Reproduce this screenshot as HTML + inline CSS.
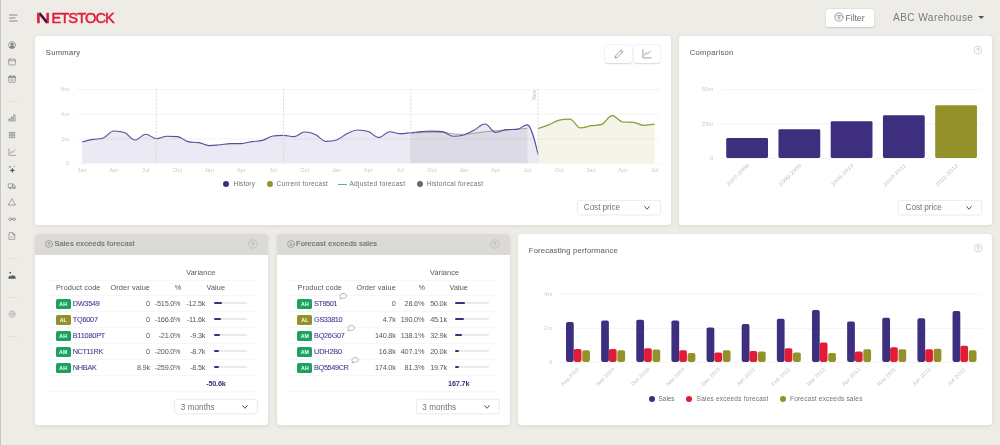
<!DOCTYPE html>
<html lang="en">
<head>
<meta charset="utf-8">
<title>Netstock dashboard</title>
<style>
*{margin:0;padding:0;box-sizing:border-box}
h1,h2{font-weight:400}
html,body{width:1000px;height:445px;overflow:hidden;background:#eeece7}
body{position:relative;font-family:"Liberation Sans",sans-serif}
.edge{position:absolute;left:0;top:0;width:1.200px;height:445px;background:#c6c5c2}
.t{position:absolute;white-space:nowrap;line-height:1;font-family:"Liberation Sans",sans-serif}
.ic{position:absolute;overflow:visible}
svg text{font-family:"Liberation Sans",sans-serif}
.card{position:absolute;background:#fff;border-radius:3px;box-shadow:0 1px 4px rgba(80,70,50,.12),0 0 1px rgba(80,70,50,.06)}
.chead{position:absolute;background:#dbdad6;border-radius:3px 3px 0 0}
.btn{position:absolute;background:#fff;border-radius:2.5px;box-shadow:0 .5px 1.500px rgba(60,40,90,.16),0 0 0 .5px rgba(60,40,90,.06)}
.sel{position:absolute;background:#fff;border:.7px solid #e2e2e8;border-radius:2px}
.sdiv{position:absolute;left:9px;width:8px;height:.6px;background:#e0ded9}
.dot{position:absolute;border-radius:50%}
.tl{position:absolute;height:.8px;background:#f7f7f7}
.badge{position:absolute;width:15px;height:10.500px;border-radius:1.600px;color:#fff;font-weight:700;font-size:5.200px;line-height:11px;text-align:center;letter-spacing:.1px}
.trk{position:absolute;height:2.300px;border-radius:1.200px;background:#eceae6}
.trk i{display:block;height:100%;border-radius:1.200px;background:#3d2f7e}
</style>
</head>
<body>
<div id="app" style="will-change:transform">
<div class="edge"></div>
<nav><svg class="ic" style="left:8.600px;top:13.800px" width="9" height="8" viewBox="0 0 9 8" stroke="#6a6a6a" stroke-width=".75" stroke-linecap="round"><path d="M.5 1h7.600M.5 4h5.600M.5 7h7.600"/></svg>
<svg class="ic" style="left:8.35px;top:41.05px" width="8.10" height="8.10" viewBox="0 0 9 9" fill="none" stroke="#828282" stroke-width="0.75" stroke-linecap="round" stroke-linejoin="round"><circle cx="4.5" cy="4.5" r="3.8"/><circle cx="4.5" cy="3.5" r="1.3" fill="#828282"/><path d="M1.9 7c.5-1.3 1.5-1.7 2.6-1.7s2.1.4 2.6 1.7c-.7.8-1.6 1.2-2.6 1.2S2.600 7.800 1.900 7z" fill="#828282"/></svg>
<svg class="ic" style="left:8.35px;top:58.45px" width="8.10" height="8.10" viewBox="0 0 9 9" fill="none" stroke="#828282" stroke-width="0.75" stroke-linecap="round" stroke-linejoin="round"><rect x=".8" y="1.2" width="7.4" height="6.6" rx=".8"/><path d="M.8 3h7.400" stroke-width=".7"/></svg>
<svg class="ic" style="left:8.35px;top:75.15px" width="8.10" height="8.10" viewBox="0 0 9 9" fill="none" stroke="#828282" stroke-width="0.75" stroke-linecap="round" stroke-linejoin="round"><rect x=".8" y="1.400" width="7.4" height="6.800" rx=".8"/><path d="M.8 2.400h7.400" stroke-width="1.300"/><path d="M2.500 .600v1.200M6.500 .600v1.200"/><rect x="3.300" y="4.300" width="2.400" height="2.200" stroke-width=".5"/></svg>
<svg class="ic" style="left:8.35px;top:114.35px" width="8.10" height="8.10" viewBox="0 0 9 9" fill="none" stroke="#828282" stroke-width="0.75" stroke-linecap="round" stroke-linejoin="round"><rect x="1" y="5.600" width="1.500" height="2.400" rx=".3"/><rect x="3.700" y="3.500" width="1.500" height="4.500" rx=".3"/><rect x="6.400" y="1" width="1.500" height="7" rx=".3"/></svg>
<svg class="ic" style="left:8.35px;top:131.15px" width="8.10" height="8.10" viewBox="0 0 9 9" fill="none" stroke="#828282" stroke-width="0.75" stroke-linecap="round" stroke-linejoin="round"><g fill="#979797" stroke="none"><rect x="1" y="1" width="2" height="2"/><rect x="3.500" y="1" width="2" height="2"/><rect x="6" y="1" width="2" height="2"/><rect x="1" y="3.500" width="2" height="2"/><rect x="3.500" y="3.500" width="2" height="2"/><rect x="6" y="3.500" width="2" height="2"/><rect x="1" y="6" width="2" height="2"/><rect x="3.500" y="6" width="2" height="2"/><rect x="6" y="6" width="2" height="2"/></g></svg>
<svg class="ic" style="left:8.35px;top:147.95px" width="8.10" height="8.10" viewBox="0 0 9 9" fill="none" stroke="#828282" stroke-width="0.75" stroke-linecap="round" stroke-linejoin="round"><path d="M1 .800v7.400h7.400"/><path d="M2.200 6.200l1.700-2.400 1.300 1.200 2.600-2.800"/></svg>
<svg class="ic" style="left:8.35px;top:164.75px" width="8.10" height="8.10" viewBox="0 0 9 9" fill="none" stroke="#828282" stroke-width="0.75" stroke-linecap="round" stroke-linejoin="round"><g fill="#5e5e5e" stroke="none"><path d="M4.900 2.800l.95 2.150 2.150.95-2.150.95-.95 2.150-.95-2.150-2.150-.95 2.150-.95z"/><path d="M2.100 .9l.4.900.9.400-.9.400-.4.900-.4-.900-.9-.400.9-.400z"/><path d="M6.900 .5l.3.600.6.300-.6.300-.3.600-.3-.600-.6-.300.6-.300z"/></g></svg>
<svg class="ic" style="left:8.35px;top:181.55px" width="8.10" height="8.10" viewBox="0 0 9 9" fill="none" stroke="#828282" stroke-width="0.75" stroke-linecap="round" stroke-linejoin="round"><path d="M.8 2h4.600v4.400H.8zM5.400 3.300h1.700l1.300 1.500v1.600H5.400z"/><circle cx="2.400" cy="6.700" r=".8" fill="#edebe6"/><circle cx="6.700" cy="6.700" r=".8" fill="#edebe6"/></svg>
<svg class="ic" style="left:8.35px;top:198.35px" width="8.10" height="8.10" viewBox="0 0 9 9" fill="none" stroke="#828282" stroke-width="0.75" stroke-linecap="round" stroke-linejoin="round"><path d="M4.500 1.200L8.300 7.800H.700z"/></svg>
<svg class="ic" style="left:8.35px;top:215.15px" width="8.10" height="8.10" viewBox="0 0 9 9" fill="none" stroke="#828282" stroke-width="0.75" stroke-linecap="round" stroke-linejoin="round"><circle cx="2.400" cy="4.700" r="1.500"/><circle cx="6.600" cy="4.700" r="1.500"/><path d="M3.900 4.500h1.200"/></svg>
<svg class="ic" style="left:8.35px;top:231.95px" width="8.10" height="8.10" viewBox="0 0 9 9" fill="none" stroke="#828282" stroke-width="0.75" stroke-linecap="round" stroke-linejoin="round"><path d="M1.500 .800h4l2 2v5.400h-6z"/><path d="M5.500 .800v2h2"/><path d="M3 6.200l.9-1.200.8.700 1.100-1.300" stroke-width=".55"/></svg>
<svg class="ic" style="left:8.35px;top:270.75px" width="8.10" height="8.10" viewBox="0 0 9 9" fill="none" stroke="#828282" stroke-width="0.75" stroke-linecap="round" stroke-linejoin="round"><g fill="#5c5c5c" stroke="none"><path d="M.5 8.600V6.700L2.200 4.900l1.100 1.100 1.300-1.700 1 1.300 1-1 1.900 2v2z"/><circle cx="2.500" cy="1.900" r="1"/></g></svg>
<svg class="ic" style="left:8.35px;top:309.75px" width="8.10" height="8.10" viewBox="0 0 9 9" fill="none" stroke="#828282" stroke-width="0.75" stroke-linecap="round" stroke-linejoin="round"><path d="M7.43 3.85 L8.21 3.98 L8.21 5.02 L7.43 5.15 L7.03 6.11 L7.50 6.76 L6.76 7.50 L6.11 7.03 L5.15 7.43 L5.02 8.21 L3.98 8.21 L3.85 7.43 L2.89 7.03 L2.24 7.50 L1.50 6.76 L1.97 6.11 L1.57 5.15 L0.79 5.02 L0.79 3.98 L1.57 3.85 L1.97 2.89 L1.50 2.24 L2.24 1.50 L2.89 1.97 L3.85 1.57 L3.98 0.79 L5.02 0.79 L5.15 1.57 L6.11 1.97 L6.76 1.50 L7.50 2.24 L7.03 2.89z" stroke="#8e8e8e" stroke-width=".55"/><circle cx="4.500" cy="4.500" r="1.400" stroke="#8e8e8e" stroke-width=".55"/></svg>
<div class="sdiv" style="top:100.75px"></div>
<div class="sdiv" style="top:258.25px"></div>
<div class="sdiv" style="top:297.25px"></div>
<div class="sdiv" style="top:335.75px"></div></nav>
<header><h1 class="logo" aria-label="NETSTOCK"><span class="t" style="top:11.00px;font-size:14.6px;color:#e31b37;left:36.25px;transform:scaleX(1.34);transform-origin:0 0;-webkit-text-stroke:.6px #e31b37;">N</span><span class="t" style="top:11.00px;font-size:14.6px;color:#e31b37;letter-spacing:-0.895px;left:51.50px;-webkit-text-stroke:0.5px #e31b37;">ETSTOCK</span></h1>
<svg class="ic" style="left:0;top:0" width="60" height="30" viewBox="0 0 60 30"><clipPath id="nclip"><rect x="39.700" y="12" width="7.400" height="12"/></clipPath><path d="M37.500 12.400h3l8.800 10.800h-3z" fill="#2b1a4f" clip-path="url(#nclip)"/></svg>
<div class="btn" style="left:825.6px;top:8.5px;width:48.2px;height:18.6px"></div>
<svg class="ic" style="left:833.7px;top:12.300px" width="10" height="10" viewBox="0 0 10 10" fill="none" stroke="#777" stroke-width=".7" stroke-linecap="round"><circle cx="5" cy="5" r="4.100"/><path d="M2.900 3.600h4.200M3.600 5.100h2.800M4.400 6.600h1.200"/></svg>
<span class="t" style="top:14.00px;font-size:8.8px;color:#6e6e6e;letter-spacing:-0.113px;left:845.60px;">Filter</span>
<span class="t" style="top:13.00px;font-size:10.1px;color:#7a7a7a;letter-spacing:0.432px;left:893.00px;">ABC Warehouse</span>
<svg class="ic" style="left:978.300px;top:15.900px" width="7" height="4" viewBox="0 0 7 4"><path d="M.2 0h6L3.200 3z" fill="#555"/></svg></header>
<main>
<section class="panel" id="summary">
<div class="card" style="left:35px;top:36.3px;width:635.60px;height:189.00px"></div>
<h2 class="t" style="top:49.00px;font-size:7.6px;color:#696969;letter-spacing:0.300px;left:45.80px;-webkit-text-stroke:0.1px #696969;">Summary</h2>
<div class="btn b2" style="left:605.3px;top:44.600px;width:26.6px;height:18.300px"></div>
<div class="btn b2" style="left:633.9px;top:44.600px;width:26.4px;height:18.300px"></div>
<svg class="ic" style="left:613.6px;top:48.700px" width="10" height="10" viewBox="0 0 10 10" fill="none" stroke="#777" stroke-width=".7" stroke-linejoin="round"><path d="M1 9l.7-2.400L7.300 1l1.700 1.700-5.600 5.600z"/><path d="M6.400 1.900l1.700 1.700"/></svg>
<svg class="ic" style="left:642.2px;top:48.700px" width="10" height="10" viewBox="0 0 10 10" fill="none" stroke="#777" stroke-width=".7" stroke-linecap="round" stroke-linejoin="round"><path d="M.9 .600v8.300h8.300"/><path d="M2.400 6.200l1.700-2.500 1.400 1.300 2.900-2.900"/></svg>
<svg class="ic" style="left:0;top:0" width="1000" height="445" viewBox="0 0 1000 445">
<path d="M76.800 89.50H660" stroke="#f1f1f1" stroke-width=".8"/>
<path d="M76.800 114.20H660" stroke="#f1f1f1" stroke-width=".8"/>
<path d="M76.800 138.90H660" stroke="#f1f1f1" stroke-width=".8"/>
<path d="M76.800 163.60H660" stroke="#f1f1f1" stroke-width=".8"/>
<path d="M82.10,142.00 C82.10,142.00 88.46,140.20 92.70,139.40 C96.94,138.60 99.06,139.40 103.30,138.00 C107.54,136.60 109.67,131.00 113.91,131.00 C118.15,131.00 120.27,131.00 124.51,132.60 C128.75,134.20 130.87,140.00 135.11,140.00 C139.35,140.00 141.47,134.20 145.71,134.20 C149.95,134.20 152.07,138.60 156.31,138.60 C160.55,138.60 162.68,136.20 166.92,136.20 C171.16,136.20 173.28,136.20 177.52,136.60 C181.76,137.00 183.88,140.60 188.12,141.60 C192.36,142.60 194.48,141.80 198.72,142.60 C202.96,143.40 205.08,145.60 209.32,145.60 C213.56,145.60 215.69,145.20 219.93,144.80 C224.17,144.40 226.29,143.60 230.53,143.60 C234.77,143.60 236.89,143.60 241.13,143.60 C245.37,143.60 247.49,142.24 251.73,141.60 C255.97,140.96 258.09,141.52 262.33,140.40 C266.57,139.28 268.70,136.60 272.94,136.00 C277.18,135.40 279.30,135.40 283.54,135.40 C287.78,135.40 289.90,136.60 294.14,136.60 C298.38,136.60 300.50,132.00 304.74,132.00 C308.98,132.00 311.10,132.52 315.34,134.40 C319.58,136.28 321.71,141.40 325.95,141.40 C330.19,141.40 332.31,141.40 336.55,140.00 C340.79,138.60 342.91,135.60 347.15,133.60 C351.39,131.60 353.51,130.00 357.75,130.00 C361.99,130.00 364.11,130.08 368.35,131.60 C372.59,133.12 374.72,137.60 378.96,137.60 C383.20,137.60 385.32,131.80 389.56,131.80 C393.80,131.80 395.92,133.60 400.16,133.60 C404.40,133.60 406.52,133.10 410.76,132.70 C415.00,132.30 417.12,131.92 421.36,131.60 C425.60,131.28 427.73,131.10 431.97,131.10 C436.21,131.10 438.33,131.10 442.57,131.60 C446.81,132.10 448.93,136.30 453.17,136.30 C457.41,136.30 459.53,136.26 463.77,135.00 C468.01,133.74 470.13,132.20 474.37,130.00 C478.61,127.80 480.74,124.00 484.98,124.00 C489.22,124.00 491.34,132.40 495.58,132.40 C499.82,132.40 501.94,129.80 506.18,129.60 C510.42,129.40 512.54,129.60 516.78,129.40 C521.02,129.20 523.14,124.90 527.38,124.90 C531.62,124.90 537.99,154.40 537.99,154.40 L537.99,163.1 L82.10,163.1Z" fill="#5b4ea0" fill-opacity=".12"/>
<path d="M410.76,133.20 C410.76,133.20 417.12,132.80 421.36,132.60 C425.60,132.40 427.73,132.20 431.97,132.20 C436.21,132.20 438.33,132.20 442.57,132.40 C446.81,132.60 448.93,133.52 453.17,133.90 C457.41,134.28 459.53,134.30 463.77,134.30 C468.01,134.30 470.13,133.70 474.37,133.20 C478.61,132.70 480.74,132.28 484.98,131.80 C489.22,131.32 491.34,131.16 495.58,130.80 C499.82,130.44 501.94,130.32 506.18,130.00 C510.42,129.68 512.54,129.54 516.78,129.20 C521.02,128.86 527.38,128.30 527.38,128.30 L527.38,163.1 L410.76,163.1Z" fill="#55555f" fill-opacity=".10"/>
<path d="M410.76,133.20 C410.76,133.20 417.12,132.80 421.36,132.60 C425.60,132.40 427.73,132.20 431.97,132.20 C436.21,132.20 438.33,132.20 442.57,132.40 C446.81,132.60 448.93,133.52 453.17,133.90 C457.41,134.28 459.53,134.30 463.77,134.30 C468.01,134.30 470.13,133.70 474.37,133.20 C478.61,132.70 480.74,132.28 484.98,131.80 C489.22,131.32 491.34,131.16 495.58,130.80 C499.82,130.44 501.94,130.32 506.18,130.00 C510.42,129.68 512.54,129.54 516.78,129.20 C521.02,128.86 527.38,128.30 527.38,128.30" fill="none" stroke="#8a8a8a" stroke-width=".8"/>
<path d="M82.10,142.00 C82.10,142.00 88.46,140.20 92.70,139.40 C96.94,138.60 99.06,139.40 103.30,138.00 C107.54,136.60 109.67,131.00 113.91,131.00 C118.15,131.00 120.27,131.00 124.51,132.60 C128.75,134.20 130.87,140.00 135.11,140.00 C139.35,140.00 141.47,134.20 145.71,134.20 C149.95,134.20 152.07,138.60 156.31,138.60 C160.55,138.60 162.68,136.20 166.92,136.20 C171.16,136.20 173.28,136.20 177.52,136.60 C181.76,137.00 183.88,140.60 188.12,141.60 C192.36,142.60 194.48,141.80 198.72,142.60 C202.96,143.40 205.08,145.60 209.32,145.60 C213.56,145.60 215.69,145.20 219.93,144.80 C224.17,144.40 226.29,143.60 230.53,143.60 C234.77,143.60 236.89,143.60 241.13,143.60 C245.37,143.60 247.49,142.24 251.73,141.60 C255.97,140.96 258.09,141.52 262.33,140.40 C266.57,139.28 268.70,136.60 272.94,136.00 C277.18,135.40 279.30,135.40 283.54,135.40 C287.78,135.40 289.90,136.60 294.14,136.60 C298.38,136.60 300.50,132.00 304.74,132.00 C308.98,132.00 311.10,132.52 315.34,134.40 C319.58,136.28 321.71,141.40 325.95,141.40 C330.19,141.40 332.31,141.40 336.55,140.00 C340.79,138.60 342.91,135.60 347.15,133.60 C351.39,131.60 353.51,130.00 357.75,130.00 C361.99,130.00 364.11,130.08 368.35,131.60 C372.59,133.12 374.72,137.60 378.96,137.60 C383.20,137.60 385.32,131.80 389.56,131.80 C393.80,131.80 395.92,133.60 400.16,133.60 C404.40,133.60 406.52,133.10 410.76,132.70 C415.00,132.30 417.12,131.92 421.36,131.60 C425.60,131.28 427.73,131.10 431.97,131.10 C436.21,131.10 438.33,131.10 442.57,131.60 C446.81,132.10 448.93,136.30 453.17,136.30 C457.41,136.30 459.53,136.26 463.77,135.00 C468.01,133.74 470.13,132.20 474.37,130.00 C478.61,127.80 480.74,124.00 484.98,124.00 C489.22,124.00 491.34,132.40 495.58,132.40 C499.82,132.40 501.94,129.80 506.18,129.60 C510.42,129.40 512.54,129.60 516.78,129.40 C521.02,129.20 523.14,124.90 527.38,124.90 C531.62,124.90 537.99,154.40 537.99,154.40" fill="none" stroke="#5b4da0" stroke-width="1.100"/>
<path d="M537.99,128.70 C537.99,128.70 544.35,126.62 548.59,124.90 C552.83,123.18 554.95,121.20 559.19,120.10 C563.43,119.00 565.55,119.00 569.79,119.00 C574.03,119.00 576.15,127.90 580.39,127.90 C584.63,127.90 586.76,126.40 591.00,125.70 C595.24,125.00 597.36,125.70 601.60,124.40 C605.84,123.10 607.96,115.60 612.20,115.60 C616.44,115.60 618.56,121.70 622.80,122.00 C627.04,122.30 629.16,122.00 633.40,122.30 C637.64,122.60 639.77,125.30 644.01,125.30 C648.25,125.30 654.61,124.20 654.61,124.20 L654.61,163.1 L537.99,163.1Z" fill="#93922a" fill-opacity=".10"/>
<path d="M537.99,128.70 C537.99,128.70 544.35,126.62 548.59,124.90 C552.83,123.18 554.95,121.20 559.19,120.10 C563.43,119.00 565.55,119.00 569.79,119.00 C574.03,119.00 576.15,127.90 580.39,127.90 C584.63,127.90 586.76,126.40 591.00,125.70 C595.24,125.00 597.36,125.70 601.60,124.40 C605.84,123.10 607.96,115.60 612.20,115.60 C616.44,115.60 618.56,121.70 622.80,122.00 C627.04,122.30 629.16,122.00 633.40,122.30 C637.64,122.60 639.77,125.30 644.01,125.30 C648.25,125.30 654.61,124.20 654.61,124.20" fill="none" stroke="#8f9a35" stroke-width="1.250"/>
<path d="M156.31 89V163.1" stroke="#d2d2d2" stroke-width=".8" stroke-dasharray="2 1.500"/>
<path d="M283.54 89V163.1" stroke="#d2d2d2" stroke-width=".8" stroke-dasharray="2 1.500"/>
<path d="M410.76 89V163.1" stroke="#d2d2d2" stroke-width=".8" stroke-dasharray="2 1.500"/>
<path d="M537.99 89V163.1" stroke="#d2d2d2" stroke-width=".8" stroke-dasharray="2 1.500"/>
</svg>
<span class="t" style="top:87.00px;font-size:5.6px;color:#c9c9c9;letter-spacing:0.250px;right:930.65px;">6m</span>
<span class="t" style="top:112.00px;font-size:5.6px;color:#c9c9c9;letter-spacing:0.250px;right:930.65px;">4m</span>
<span class="t" style="top:137.00px;font-size:5.6px;color:#c9c9c9;letter-spacing:0.250px;right:930.65px;">2m</span>
<span class="t" style="top:161.00px;font-size:5.6px;color:#c9c9c9;letter-spacing:0.250px;right:930.65px;">0</span>
<span class="t" style="top:168.00px;font-size:5.5px;color:#c9c9c9;letter-spacing:0.200px;left:-17.80px;width:200px;text-align:center;">Jan</span>
<span class="t" style="top:168.00px;font-size:5.5px;color:#c9c9c9;letter-spacing:0.200px;left:14.01px;width:200px;text-align:center;">Apr</span>
<span class="t" style="top:168.00px;font-size:5.5px;color:#c9c9c9;letter-spacing:0.200px;left:45.81px;width:200px;text-align:center;">Jul</span>
<span class="t" style="top:168.00px;font-size:5.5px;color:#c9c9c9;letter-spacing:0.200px;left:77.62px;width:200px;text-align:center;">Oct</span>
<span class="t" style="top:168.00px;font-size:5.5px;color:#c9c9c9;letter-spacing:0.200px;left:109.42px;width:200px;text-align:center;">Jan</span>
<span class="t" style="top:168.00px;font-size:5.5px;color:#c9c9c9;letter-spacing:0.200px;left:141.23px;width:200px;text-align:center;">Apr</span>
<span class="t" style="top:168.00px;font-size:5.5px;color:#c9c9c9;letter-spacing:0.200px;left:173.04px;width:200px;text-align:center;">Jul</span>
<span class="t" style="top:168.00px;font-size:5.5px;color:#c9c9c9;letter-spacing:0.200px;left:204.84px;width:200px;text-align:center;">Oct</span>
<span class="t" style="top:168.00px;font-size:5.5px;color:#c9c9c9;letter-spacing:0.200px;left:236.65px;width:200px;text-align:center;">Jan</span>
<span class="t" style="top:168.00px;font-size:5.5px;color:#c9c9c9;letter-spacing:0.200px;left:268.45px;width:200px;text-align:center;">Apr</span>
<span class="t" style="top:168.00px;font-size:5.5px;color:#c9c9c9;letter-spacing:0.200px;left:300.26px;width:200px;text-align:center;">Jul</span>
<span class="t" style="top:168.00px;font-size:5.5px;color:#c9c9c9;letter-spacing:0.200px;left:332.07px;width:200px;text-align:center;">Oct</span>
<span class="t" style="top:168.00px;font-size:5.5px;color:#c9c9c9;letter-spacing:0.200px;left:363.87px;width:200px;text-align:center;">Jan</span>
<span class="t" style="top:168.00px;font-size:5.5px;color:#c9c9c9;letter-spacing:0.200px;left:395.68px;width:200px;text-align:center;">Apr</span>
<span class="t" style="top:168.00px;font-size:5.5px;color:#c9c9c9;letter-spacing:0.200px;left:427.48px;width:200px;text-align:center;">Jul</span>
<span class="t" style="top:168.00px;font-size:5.5px;color:#c9c9c9;letter-spacing:0.200px;left:459.29px;width:200px;text-align:center;">Oct</span>
<span class="t" style="top:168.00px;font-size:5.5px;color:#c9c9c9;letter-spacing:0.200px;left:491.10px;width:200px;text-align:center;">Jan</span>
<span class="t" style="top:168.00px;font-size:5.5px;color:#c9c9c9;letter-spacing:0.200px;left:522.90px;width:200px;text-align:center;">Apr</span>
<span class="t" style="top:168.00px;font-size:5.5px;color:#c9c9c9;letter-spacing:0.200px;left:554.71px;width:200px;text-align:center;">Jul</span>
<span class="t" style="top:-4.00px;font-size:5px;color:#b2b2b2;left:0.00px;left:531.700px;top:100px;transform:rotate(-90deg);transform-origin:0 0;letter-spacing:.2px;">Now</span>
<i class="dot" style="left:223.40px;top:181.10px;width:6px;height:6px;background:#3d2f7e"></i>
<span class="t" style="top:181.00px;font-size:6.5px;color:#707070;letter-spacing:0.178px;left:233.60px;">History</span>
<i class="dot" style="left:266.60px;top:181.10px;width:6px;height:6px;background:#93922a"></i>
<span class="t" style="top:181.00px;font-size:6.5px;color:#707070;letter-spacing:0.313px;left:276.50px;">Current forecast</span>
<i class="dot" style="left:338px;top:183.700px;width:8.700px;height:.9px;background:#3cc08e;border-radius:0"></i>
<span class="t" style="top:181.00px;font-size:6.5px;color:#707070;letter-spacing:0.335px;left:349.40px;">Adjusted forecast</span>
<i class="dot" style="left:416.60px;top:181.10px;width:6px;height:6px;background:#6b6b6b"></i>
<span class="t" style="top:181.00px;font-size:6.5px;color:#707070;letter-spacing:0.269px;left:426.50px;">Historical forecast</span>
<svg class="ic" style="left:576.5px;top:199.5px" width="84.00" height="15.40" viewBox="0 0 84.00 15.40"><rect x=".35" y=".35" width="83.30" height="14.70" rx="2.300" fill="#fff" stroke="#e1e1e5" stroke-width=".7"/></svg><span class="t" style="top:204.00px;font-size:8.2px;color:#737373;letter-spacing:-0.073px;left:583.80px;">Cost price</span><svg class="ic" style="left:643.80px;top:205.70px" width="6" height="4" viewBox="0 0 6 4"><path d="M.7 .6l2.300 2.700L5.300 .6" fill="none" stroke="#555a6b" stroke-width="1" stroke-linecap="round" stroke-linejoin="round"/></svg>
</section>
<section class="panel" id="comparison">
<div class="card" style="left:678.8px;top:36.3px;width:313.50px;height:189.00px"></div>
<h2 class="t" style="top:49.00px;font-size:7.6px;color:#696969;letter-spacing:0.283px;left:689.80px;-webkit-text-stroke:0.1px #696969;">Comparison</h2>
<svg class="ic" style="left:973.05px;top:45.45px" width="10" height="10" viewBox="0 0 10 10"><circle cx="5" cy="5" r="3.85" fill="none" stroke="#c2c2c2" stroke-width="0.65"/><path d="M3.900 4.200c0-.7.500-1.150 1.100-1.150s1.100.45 1.100 1.050c0 .8-1.100.9-1.100 1.700" fill="none" stroke="#a8a8a8" stroke-width="0.650" stroke-linecap="round"/><circle cx="5" cy="6.900" r=".4" fill="#a8a8a8"/></svg>
<svg class="ic" style="left:0;top:0" width="1000" height="445" viewBox="0 0 1000 445">
<path d="M721 89.6H982.200" stroke="#f1f1f1" stroke-width=".8"/>
<path d="M721 124H982.200" stroke="#f1f1f1" stroke-width=".8"/>
<path d="M721 158.4H982.200" stroke="#f1f1f1" stroke-width=".8"/>
<rect x="726.22" y="138.10" width="41.79" height="19.90" rx="1.400" fill="#3d2f7e"/>
<text x="749.42" y="165.80" transform="rotate(-45 749.42 165.800)" text-anchor="end" font-size="5" fill="#c0c0c0" textLength="29.600" lengthAdjust="spacingAndGlyphs">2007-2008</text>
<rect x="778.46" y="129.20" width="41.79" height="28.80" rx="1.400" fill="#3d2f7e"/>
<text x="801.66" y="165.80" transform="rotate(-45 801.66 165.800)" text-anchor="end" font-size="5" fill="#c0c0c0" textLength="29.600" lengthAdjust="spacingAndGlyphs">2008-2009</text>
<rect x="830.70" y="121.20" width="41.79" height="36.80" rx="1.400" fill="#3d2f7e"/>
<text x="853.90" y="165.80" transform="rotate(-45 853.90 165.800)" text-anchor="end" font-size="5" fill="#c0c0c0" textLength="29.600" lengthAdjust="spacingAndGlyphs">2009-2010</text>
<rect x="882.94" y="115.30" width="41.79" height="42.70" rx="1.400" fill="#3d2f7e"/>
<text x="906.14" y="165.80" transform="rotate(-45 906.14 165.800)" text-anchor="end" font-size="5" fill="#c0c0c0" textLength="29.600" lengthAdjust="spacingAndGlyphs">2010-2011</text>
<rect x="935.18" y="105.20" width="41.79" height="52.80" rx="1.400" fill="#93922a"/>
<text x="958.38" y="165.80" transform="rotate(-45 958.38 165.800)" text-anchor="end" font-size="5" fill="#c0c0c0" textLength="29.600" lengthAdjust="spacingAndGlyphs">2011-2012</text>
</svg>
<span class="t" style="top:87.00px;font-size:5.6px;color:#c9c9c9;letter-spacing:0.250px;right:286.55px;">50m</span>
<span class="t" style="top:122.00px;font-size:5.6px;color:#c9c9c9;letter-spacing:0.250px;right:286.55px;">25m</span>
<span class="t" style="top:156.00px;font-size:5.6px;color:#c9c9c9;letter-spacing:0.250px;right:286.55px;">0</span>
<svg class="ic" style="left:898.3px;top:199.5px" width="83.90" height="15.40" viewBox="0 0 83.90 15.40"><rect x=".35" y=".35" width="83.20" height="14.70" rx="2.300" fill="#fff" stroke="#e1e1e5" stroke-width=".7"/></svg><span class="t" style="top:204.00px;font-size:8.2px;color:#737373;letter-spacing:-0.073px;left:905.60px;">Cost price</span><svg class="ic" style="left:966.20px;top:205.70px" width="6" height="4" viewBox="0 0 6 4"><path d="M.7 .6l2.300 2.700L5.300 .6" fill="none" stroke="#555a6b" stroke-width="1" stroke-linecap="round" stroke-linejoin="round"/></svg>
</section>
<section class="panel" id="sales-exceeds-forecast">
<div class="card" style="left:35px;top:234px;width:233.00px;height:191.00px"></div>
<div class="chead" style="left:35px;top:234px;width:233.00px;height:21.00px"></div>
<svg class="ic" style="left:44.65px;top:239.80px" width="8" height="8" viewBox="0 0 8 8" fill="none" stroke="#777" stroke-width=".55" stroke-linecap="round" stroke-linejoin="round"><circle cx="4" cy="4" r="3.450"/><path d="M4 5.600V2.500M2.800 3.600L4 2.400l1.200 1.200"/></svg>
<h2 class="t" style="top:240.00px;font-size:7.5px;color:#707070;letter-spacing:0.131px;left:54.40px;-webkit-text-stroke:0.18px #707070;">Sales exceeds forecast</h2>
<svg class="ic" style="left:248.00px;top:238.90px" width="10" height="10" viewBox="0 0 10 10"><circle cx="5" cy="5" r="4.2" fill="none" stroke="#b4b2ae" stroke-width="0.65"/><path d="M3.900 4.200c0-.7.500-1.150 1.100-1.150s1.100.45 1.100 1.050c0 .8-1.100.9-1.100 1.700" fill="none" stroke="#a5a39f" stroke-width="0.650" stroke-linecap="round"/><circle cx="5" cy="6.900" r=".4" fill="#a5a39f"/></svg>
<div class="tl" style="left:46.3px;top:279.80px;width:211.30px"></div>
<div class="tl" style="left:46.3px;top:295.30px;width:211.30px"></div>
<div class="tl" style="left:46.3px;top:311.30px;width:211.30px"></div>
<div class="tl" style="left:46.3px;top:327.30px;width:211.30px"></div>
<div class="tl" style="left:46.3px;top:343.30px;width:211.30px"></div>
<div class="tl" style="left:46.3px;top:359.30px;width:211.30px"></div>
<div class="tl" style="left:46.3px;top:375.30px;width:211.30px"></div>
<div class="tl" style="left:46.3px;top:391.30px;width:211.30px"></div>
<span class="t" style="top:269.00px;font-size:7.3px;color:#585858;letter-spacing:0.105px;left:186.25px;">Variance</span>
<span class="t" style="top:284.00px;font-size:7.3px;color:#585858;letter-spacing:0.118px;left:56.10px;">Product code</span>
<span class="t" style="top:284.00px;font-size:7.3px;color:#585858;letter-spacing:0.127px;left:110.50px;">Order value</span>
<span class="t" style="top:284.00px;font-size:7.3px;color:#585858;letter-spacing:0.000px;left:174.80px;">%</span>
<span class="t" style="top:284.00px;font-size:7.3px;color:#585858;letter-spacing:0.069px;left:206.60px;">Value</span>
<div class="badge" style="left:55.7px;top:298.50px;background:#1ba260">AH</div>
<span class="t" style="top:300.00px;font-size:7.3px;color:#45398f;letter-spacing:-0.258px;left:72.70px;-webkit-text-stroke:0.08px #45398f;">DW3549</span>
<span class="t" style="top:300.00px;font-size:7.3px;color:#585858;letter-spacing:-0.220px;right:850.12px;">0</span>
<span class="t" style="top:300.00px;font-size:7.3px;color:#585858;letter-spacing:-0.220px;right:819.62px;">-515.0%</span>
<span class="t" style="top:300.00px;font-size:7.3px;color:#585858;letter-spacing:-0.220px;right:794.72px;">-12.5k</span>
<div class="trk" style="left:213.6px;top:301.70px;width:33.30px"><i style="width:24.7%"></i></div>
<div class="badge" style="left:55.7px;top:314.50px;background:#93922a">AL</div>
<span class="t" style="top:316.00px;font-size:7.3px;color:#45398f;letter-spacing:-0.215px;left:72.70px;-webkit-text-stroke:0.08px #45398f;">TQ6007</span>
<span class="t" style="top:316.00px;font-size:7.3px;color:#585858;letter-spacing:-0.220px;right:850.12px;">0</span>
<span class="t" style="top:316.00px;font-size:7.3px;color:#585858;letter-spacing:-0.220px;right:819.62px;">-166.6%</span>
<span class="t" style="top:316.00px;font-size:7.3px;color:#585858;letter-spacing:-0.220px;right:794.72px;">-11.6k</span>
<div class="trk" style="left:213.6px;top:317.70px;width:33.30px"><i style="width:22.9%"></i></div>
<div class="badge" style="left:55.7px;top:330.50px;background:#1ba260">AH</div>
<span class="t" style="top:332.00px;font-size:7.3px;color:#45398f;letter-spacing:-0.193px;left:72.70px;-webkit-text-stroke:0.08px #45398f;">B11080PT</span>
<span class="t" style="top:332.00px;font-size:7.3px;color:#585858;letter-spacing:-0.220px;right:850.12px;">0</span>
<span class="t" style="top:332.00px;font-size:7.3px;color:#585858;letter-spacing:-0.220px;right:819.62px;">-21.0%</span>
<span class="t" style="top:332.00px;font-size:7.3px;color:#585858;letter-spacing:-0.220px;right:794.72px;">-9.3k</span>
<div class="trk" style="left:213.6px;top:333.70px;width:33.30px"><i style="width:18.4%"></i></div>
<div class="badge" style="left:55.7px;top:346.50px;background:#1ba260">AM</div>
<span class="t" style="top:348.00px;font-size:7.3px;color:#45398f;letter-spacing:-0.353px;left:72.70px;-webkit-text-stroke:0.08px #45398f;">NCT11RK</span>
<span class="t" style="top:348.00px;font-size:7.3px;color:#585858;letter-spacing:-0.220px;right:850.12px;">0</span>
<span class="t" style="top:348.00px;font-size:7.3px;color:#585858;letter-spacing:-0.220px;right:819.62px;">-200.0%</span>
<span class="t" style="top:348.00px;font-size:7.3px;color:#585858;letter-spacing:-0.220px;right:794.72px;">-8.7k</span>
<div class="trk" style="left:213.6px;top:349.70px;width:33.30px"><i style="width:17.2%"></i></div>
<div class="badge" style="left:55.7px;top:362.50px;background:#1ba260">AH</div>
<span class="t" style="top:364.00px;font-size:7.3px;color:#45398f;letter-spacing:-0.235px;left:72.70px;-webkit-text-stroke:0.08px #45398f;">NHBAK</span>
<span class="t" style="top:364.00px;font-size:7.3px;color:#585858;letter-spacing:-0.220px;right:850.12px;">8.9k</span>
<span class="t" style="top:364.00px;font-size:7.3px;color:#585858;letter-spacing:-0.220px;right:819.62px;">-259.0%</span>
<span class="t" style="top:364.00px;font-size:7.3px;color:#585858;letter-spacing:-0.220px;right:794.72px;">-8.5k</span>
<div class="trk" style="left:213.6px;top:365.70px;width:33.30px"><i style="width:16.8%"></i></div>
<span class="t" style="top:380.00px;font-size:7.3px;color:#3d2f7e;font-weight:700;letter-spacing:-0.241px;left:206.30px;">-50.6k</span>
<svg class="ic" style="left:173.8px;top:399.2px" width="83.80" height="15.20" viewBox="0 0 83.80 15.20"><rect x=".35" y=".35" width="83.10" height="14.50" rx="2.300" fill="#fff" stroke="#e1e1e5" stroke-width=".7"/></svg><span class="t" style="top:404.00px;font-size:8.2px;color:#737373;letter-spacing:0.030px;left:180.80px;">3 months</span><svg class="ic" style="left:241.80px;top:405.30px" width="6" height="4" viewBox="0 0 6 4"><path d="M.7 .6l2.300 2.700L5.300 .6" fill="none" stroke="#555a6b" stroke-width="1" stroke-linecap="round" stroke-linejoin="round"/></svg>
</section>
<section class="panel" id="forecast-exceeds-sales">
<div class="card" style="left:276.7px;top:234px;width:233.00px;height:191.00px"></div>
<div class="chead" style="left:276.7px;top:234px;width:233.00px;height:21.00px"></div>
<svg class="ic" style="left:286.60px;top:239.80px" width="8" height="8" viewBox="0 0 8 8" fill="none" stroke="#777" stroke-width=".55" stroke-linecap="round" stroke-linejoin="round"><circle cx="4" cy="4" r="3.450"/><path d="M4 2.400v3.100M2.800 4.400L4 5.600l1.200-1.200"/></svg>
<h2 class="t" style="top:240.00px;font-size:7.5px;color:#707070;letter-spacing:0.105px;left:296.00px;-webkit-text-stroke:0.18px #707070;">Forecast exceeds sales</h2>
<svg class="ic" style="left:489.70px;top:238.90px" width="10" height="10" viewBox="0 0 10 10"><circle cx="5" cy="5" r="4.2" fill="none" stroke="#b4b2ae" stroke-width="0.65"/><path d="M3.900 4.200c0-.7.500-1.150 1.100-1.150s1.100.45 1.100 1.050c0 .8-1.100.9-1.100 1.700" fill="none" stroke="#a5a39f" stroke-width="0.650" stroke-linecap="round"/><circle cx="5" cy="6.900" r=".4" fill="#a5a39f"/></svg>
<div class="tl" style="left:287.3px;top:279.80px;width:211.80px"></div>
<div class="tl" style="left:287.3px;top:295.30px;width:211.80px"></div>
<div class="tl" style="left:287.3px;top:311.30px;width:211.80px"></div>
<div class="tl" style="left:287.3px;top:327.30px;width:211.80px"></div>
<div class="tl" style="left:287.3px;top:343.30px;width:211.80px"></div>
<div class="tl" style="left:287.3px;top:359.30px;width:211.80px"></div>
<div class="tl" style="left:287.3px;top:375.30px;width:211.80px"></div>
<div class="tl" style="left:287.3px;top:391.30px;width:211.80px"></div>
<span class="t" style="top:269.00px;font-size:7.3px;color:#585858;letter-spacing:0.105px;left:430.00px;">Variance</span>
<span class="t" style="top:284.00px;font-size:7.3px;color:#585858;letter-spacing:0.118px;left:297.60px;">Product code</span>
<span class="t" style="top:284.00px;font-size:7.3px;color:#585858;letter-spacing:0.127px;left:356.40px;">Order value</span>
<span class="t" style="top:284.00px;font-size:7.3px;color:#585858;letter-spacing:0.000px;left:418.40px;">%</span>
<span class="t" style="top:284.00px;font-size:7.3px;color:#585858;letter-spacing:0.069px;left:449.50px;">Value</span>
<div class="badge" style="left:297.4px;top:298.50px;background:#1ba260">AH</div>
<span class="t" style="top:300.00px;font-size:7.3px;color:#45398f;letter-spacing:-0.473px;left:314.10px;-webkit-text-stroke:0.08px #45398f;">ST9501</span>
<span class="t" style="top:300.00px;font-size:7.3px;color:#585858;letter-spacing:-0.220px;right:604.42px;">0</span>
<span class="t" style="top:300.00px;font-size:7.3px;color:#585858;letter-spacing:-0.220px;right:575.82px;">28.6%</span>
<span class="t" style="top:300.00px;font-size:7.3px;color:#585858;letter-spacing:-0.220px;right:553.12px;">50.0k</span>
<div class="trk" style="left:455.2px;top:301.70px;width:33.50px"><i style="width:29.8%"></i></div>
<div class="badge" style="left:297.4px;top:314.50px;background:#93922a">AL</div>
<span class="t" style="top:316.00px;font-size:7.3px;color:#45398f;letter-spacing:-0.391px;left:314.10px;-webkit-text-stroke:0.08px #45398f;">GS33810</span>
<span class="t" style="top:316.00px;font-size:7.3px;color:#585858;letter-spacing:-0.220px;right:604.42px;">4.7k</span>
<span class="t" style="top:316.00px;font-size:7.3px;color:#585858;letter-spacing:-0.220px;right:575.82px;">190.0%</span>
<span class="t" style="top:316.00px;font-size:7.3px;color:#585858;letter-spacing:-0.220px;right:553.12px;">45.1k</span>
<div class="trk" style="left:455.2px;top:317.70px;width:33.50px"><i style="width:26.9%"></i></div>
<div class="badge" style="left:297.4px;top:330.50px;background:#1ba260">AM</div>
<span class="t" style="top:332.00px;font-size:7.3px;color:#45398f;letter-spacing:-0.276px;left:314.10px;-webkit-text-stroke:0.08px #45398f;">BQ26G07</span>
<span class="t" style="top:332.00px;font-size:7.3px;color:#585858;letter-spacing:-0.220px;right:604.42px;">140.8k</span>
<span class="t" style="top:332.00px;font-size:7.3px;color:#585858;letter-spacing:-0.220px;right:575.82px;">138.1%</span>
<span class="t" style="top:332.00px;font-size:7.3px;color:#585858;letter-spacing:-0.220px;right:553.12px;">32.9k</span>
<div class="trk" style="left:455.2px;top:333.70px;width:33.50px"><i style="width:19.6%"></i></div>
<div class="badge" style="left:297.4px;top:346.50px;background:#1ba260">AM</div>
<span class="t" style="top:348.00px;font-size:7.3px;color:#45398f;letter-spacing:-0.159px;left:314.10px;-webkit-text-stroke:0.08px #45398f;">UDH2B0</span>
<span class="t" style="top:348.00px;font-size:7.3px;color:#585858;letter-spacing:-0.220px;right:604.42px;">16.8k</span>
<span class="t" style="top:348.00px;font-size:7.3px;color:#585858;letter-spacing:-0.220px;right:575.82px;">407.1%</span>
<span class="t" style="top:348.00px;font-size:7.3px;color:#585858;letter-spacing:-0.220px;right:553.12px;">20.0k</span>
<div class="trk" style="left:455.2px;top:349.70px;width:33.50px"><i style="width:11.9%"></i></div>
<div class="badge" style="left:297.4px;top:362.50px;background:#1ba260">AH</div>
<span class="t" style="top:364.00px;font-size:7.3px;color:#45398f;letter-spacing:-0.361px;left:314.10px;-webkit-text-stroke:0.08px #45398f;">BQ5549CR</span>
<span class="t" style="top:364.00px;font-size:7.3px;color:#585858;letter-spacing:-0.220px;right:604.42px;">174.0k</span>
<span class="t" style="top:364.00px;font-size:7.3px;color:#585858;letter-spacing:-0.220px;right:575.82px;">81.3%</span>
<span class="t" style="top:364.00px;font-size:7.3px;color:#585858;letter-spacing:-0.220px;right:553.12px;">19.7k</span>
<div class="trk" style="left:455.2px;top:365.70px;width:33.50px"><i style="width:11.7%"></i></div>
<svg class="ic" style="left:339.20px;top:293.20px" width="8" height="7" viewBox="0 0 8 7" fill="none" stroke="#8a8a8a" stroke-width=".6" stroke-linejoin="round"><path d="M4.200 .500c1.900 0 3.300 1 3.300 2.400s-1.400 2.400-3.300 2.400c-.5 0-1-.1-1.400-.2L1 6.200l.6-1.500C1.100 4.200.900 3.600.900 2.900.900 1.500 2.300.500 4.200.500z"/></svg>
<svg class="ic" style="left:346.50px;top:325.20px" width="8" height="7" viewBox="0 0 8 7" fill="none" stroke="#8a8a8a" stroke-width=".6" stroke-linejoin="round"><path d="M4.200 .500c1.900 0 3.300 1 3.300 2.400s-1.400 2.400-3.300 2.400c-.5 0-1-.1-1.400-.2L1 6.200l.6-1.500C1.100 4.200.900 3.600.900 2.900.900 1.500 2.300.500 4.200.500z"/></svg>
<svg class="ic" style="left:350.50px;top:357.20px" width="8" height="7" viewBox="0 0 8 7" fill="none" stroke="#8a8a8a" stroke-width=".6" stroke-linejoin="round"><path d="M4.200 .500c1.900 0 3.300 1 3.300 2.400s-1.400 2.400-3.300 2.400c-.5 0-1-.1-1.400-.2L1 6.200l.6-1.500C1.100 4.200.900 3.600.900 2.900.900 1.500 2.300.500 4.200.500z"/></svg>
<span class="t" style="top:380.00px;font-size:7.3px;color:#3d2f7e;font-weight:700;letter-spacing:-0.166px;left:448.00px;">167.7k</span>
<svg class="ic" style="left:415.5px;top:399.2px" width="83.70" height="15.20" viewBox="0 0 83.70 15.20"><rect x=".35" y=".35" width="83.00" height="14.50" rx="2.300" fill="#fff" stroke="#e1e1e5" stroke-width=".7"/></svg><span class="t" style="top:404.00px;font-size:8.2px;color:#737373;letter-spacing:0.030px;left:422.30px;">3 months</span><svg class="ic" style="left:483.50px;top:405.30px" width="6" height="4" viewBox="0 0 6 4"><path d="M.7 .6l2.300 2.700L5.300 .6" fill="none" stroke="#555a6b" stroke-width="1" stroke-linecap="round" stroke-linejoin="round"/></svg>
</section>
<section class="panel" id="forecasting-performance">
<div class="card" style="left:517.8px;top:234px;width:474.50px;height:191.00px"></div>
<h2 class="t" style="top:247.00px;font-size:7.6px;color:#696969;letter-spacing:0.204px;left:528.80px;-webkit-text-stroke:0.1px #696969;">Forecasting performance</h2>
<svg class="ic" style="left:973.05px;top:243.35px" width="10" height="10" viewBox="0 0 10 10"><circle cx="5" cy="5" r="3.85" fill="none" stroke="#c2c2c2" stroke-width="0.65"/><path d="M3.900 4.200c0-.7.500-1.150 1.100-1.150s1.100.45 1.100 1.050c0 .8-1.100.9-1.100 1.700" fill="none" stroke="#a8a8a8" stroke-width="0.650" stroke-linecap="round"/><circle cx="5" cy="6.900" r=".4" fill="#a8a8a8"/></svg>
<svg class="ic" style="left:0;top:0" width="1000" height="445" viewBox="0 0 1000 445">
<path d="M559.800 294H981.500" stroke="#f1f1f1" stroke-width=".8"/>
<path d="M559.800 328.4H981.500" stroke="#f1f1f1" stroke-width=".8"/>
<path d="M559.800 362.4H981.500" stroke="#f1f1f1" stroke-width=".8"/>
<rect x="566.00" y="322.10" width="7.75" height="39.80" rx="1.8" fill="#3d2f7e"/>
<rect x="573.80" y="349.00" width="7.70" height="12.90" rx="1.8" fill="#e31b37"/>
<rect x="582.20" y="350.30" width="7.75" height="11.60" rx="1.8" fill="#93922a"/>
<text x="579.57" y="369.500" transform="rotate(-45 579.57 369.500)" text-anchor="end" font-size="5" fill="#c0c0c0" textLength="23.800" lengthAdjust="spacingAndGlyphs">Aug 2010</text>
<rect x="601.14" y="320.40" width="7.75" height="41.50" rx="1.8" fill="#3d2f7e"/>
<rect x="608.94" y="349.00" width="7.70" height="12.90" rx="1.8" fill="#e31b37"/>
<rect x="617.34" y="350.30" width="7.75" height="11.60" rx="1.8" fill="#93922a"/>
<text x="614.71" y="369.500" transform="rotate(-45 614.71 369.500)" text-anchor="end" font-size="5" fill="#c0c0c0" textLength="23.800" lengthAdjust="spacingAndGlyphs">Sep 2010</text>
<rect x="636.28" y="319.70" width="7.75" height="42.20" rx="1.8" fill="#3d2f7e"/>
<rect x="644.08" y="348.30" width="7.70" height="13.60" rx="1.8" fill="#e31b37"/>
<rect x="652.48" y="349.60" width="7.75" height="12.30" rx="1.8" fill="#93922a"/>
<text x="649.85" y="369.500" transform="rotate(-45 649.85 369.500)" text-anchor="end" font-size="5" fill="#c0c0c0" textLength="23.800" lengthAdjust="spacingAndGlyphs">Oct 2010</text>
<rect x="671.42" y="320.40" width="7.75" height="41.50" rx="1.8" fill="#3d2f7e"/>
<rect x="679.22" y="350.30" width="7.70" height="11.60" rx="1.8" fill="#e31b37"/>
<rect x="687.62" y="353.10" width="7.75" height="8.80" rx="1.8" fill="#93922a"/>
<text x="685.00" y="369.500" transform="rotate(-45 685.00 369.500)" text-anchor="end" font-size="5" fill="#c0c0c0" textLength="23.800" lengthAdjust="spacingAndGlyphs">Nov 2010</text>
<rect x="706.57" y="327.40" width="7.75" height="34.50" rx="1.8" fill="#3d2f7e"/>
<rect x="714.37" y="352.50" width="7.70" height="9.40" rx="1.8" fill="#e31b37"/>
<rect x="722.77" y="350.30" width="7.75" height="11.60" rx="1.8" fill="#93922a"/>
<text x="720.14" y="369.500" transform="rotate(-45 720.14 369.500)" text-anchor="end" font-size="5" fill="#c0c0c0" textLength="23.800" lengthAdjust="spacingAndGlyphs">Dec 2010</text>
<rect x="741.71" y="324.10" width="7.75" height="37.80" rx="1.8" fill="#3d2f7e"/>
<rect x="749.51" y="350.90" width="7.70" height="11.00" rx="1.8" fill="#e31b37"/>
<rect x="757.91" y="351.60" width="7.75" height="10.30" rx="1.8" fill="#93922a"/>
<text x="755.28" y="369.500" transform="rotate(-45 755.28 369.500)" text-anchor="end" font-size="5" fill="#c0c0c0" textLength="23.800" lengthAdjust="spacingAndGlyphs">Jan 2011</text>
<rect x="776.85" y="318.80" width="7.75" height="43.10" rx="1.8" fill="#3d2f7e"/>
<rect x="784.65" y="348.30" width="7.70" height="13.60" rx="1.8" fill="#e31b37"/>
<rect x="793.05" y="352.50" width="7.75" height="9.40" rx="1.8" fill="#93922a"/>
<text x="790.42" y="369.500" transform="rotate(-45 790.42 369.500)" text-anchor="end" font-size="5" fill="#c0c0c0" textLength="23.800" lengthAdjust="spacingAndGlyphs">Feb 2011</text>
<rect x="811.99" y="310.00" width="7.75" height="51.90" rx="1.8" fill="#3d2f7e"/>
<rect x="819.79" y="342.40" width="7.70" height="19.50" rx="1.8" fill="#e31b37"/>
<rect x="828.19" y="353.10" width="7.75" height="8.80" rx="1.8" fill="#93922a"/>
<text x="825.56" y="369.500" transform="rotate(-45 825.56 369.500)" text-anchor="end" font-size="5" fill="#c0c0c0" textLength="23.800" lengthAdjust="spacingAndGlyphs">Mar 2011</text>
<rect x="847.13" y="321.50" width="7.75" height="40.40" rx="1.8" fill="#3d2f7e"/>
<rect x="854.93" y="351.40" width="7.70" height="10.50" rx="1.8" fill="#e31b37"/>
<rect x="863.33" y="349.20" width="7.75" height="12.70" rx="1.8" fill="#93922a"/>
<text x="860.70" y="369.500" transform="rotate(-45 860.70 369.500)" text-anchor="end" font-size="5" fill="#c0c0c0" textLength="23.800" lengthAdjust="spacingAndGlyphs">Apr 2011</text>
<rect x="882.28" y="317.70" width="7.75" height="44.20" rx="1.8" fill="#3d2f7e"/>
<rect x="890.08" y="347.20" width="7.70" height="14.70" rx="1.8" fill="#e31b37"/>
<rect x="898.48" y="349.20" width="7.75" height="12.70" rx="1.8" fill="#93922a"/>
<text x="895.85" y="369.500" transform="rotate(-45 895.85 369.500)" text-anchor="end" font-size="5" fill="#c0c0c0" textLength="23.800" lengthAdjust="spacingAndGlyphs">May 2011</text>
<rect x="917.42" y="318.20" width="7.75" height="43.70" rx="1.8" fill="#3d2f7e"/>
<rect x="925.22" y="349.20" width="7.70" height="12.70" rx="1.8" fill="#e31b37"/>
<rect x="933.62" y="348.70" width="7.75" height="13.20" rx="1.8" fill="#93922a"/>
<text x="930.99" y="369.500" transform="rotate(-45 930.99 369.500)" text-anchor="end" font-size="5" fill="#c0c0c0" textLength="23.800" lengthAdjust="spacingAndGlyphs">Jun 2011</text>
<rect x="952.56" y="311.10" width="7.75" height="50.80" rx="1.8" fill="#3d2f7e"/>
<rect x="960.36" y="345.70" width="7.70" height="16.20" rx="1.8" fill="#e31b37"/>
<rect x="968.76" y="350.30" width="7.75" height="11.60" rx="1.8" fill="#93922a"/>
<text x="966.13" y="369.500" transform="rotate(-45 966.13 369.500)" text-anchor="end" font-size="5" fill="#c0c0c0" textLength="23.800" lengthAdjust="spacingAndGlyphs">Jul 2011</text>
</svg>
<span class="t" style="top:292.00px;font-size:5.6px;color:#c9c9c9;letter-spacing:0.250px;right:447.45px;">4m</span>
<span class="t" style="top:326.00px;font-size:5.6px;color:#c9c9c9;letter-spacing:0.250px;right:447.45px;">2m</span>
<span class="t" style="top:360.00px;font-size:5.6px;color:#c9c9c9;letter-spacing:0.250px;right:447.45px;">0</span>
<i class="dot" style="left:648.50px;top:396.00px;width:6px;height:6px;background:#3d2f7e"></i>
<span class="t" style="top:396.00px;font-size:6.5px;color:#707070;letter-spacing:-0.066px;left:658.60px;">Sales</span>
<i class="dot" style="left:686.30px;top:396.00px;width:6px;height:6px;background:#e31b37"></i>
<span class="t" style="top:396.00px;font-size:6.5px;color:#707070;letter-spacing:0.214px;left:696.60px;">Sales exceeds forecast</span>
<i class="dot" style="left:779.70px;top:396.00px;width:6px;height:6px;background:#93922a"></i>
<span class="t" style="top:396.00px;font-size:6.5px;color:#707070;letter-spacing:0.195px;left:790.00px;">Forecast exceeds sales</span>
</section>
</main>
</div>
</body></html>
